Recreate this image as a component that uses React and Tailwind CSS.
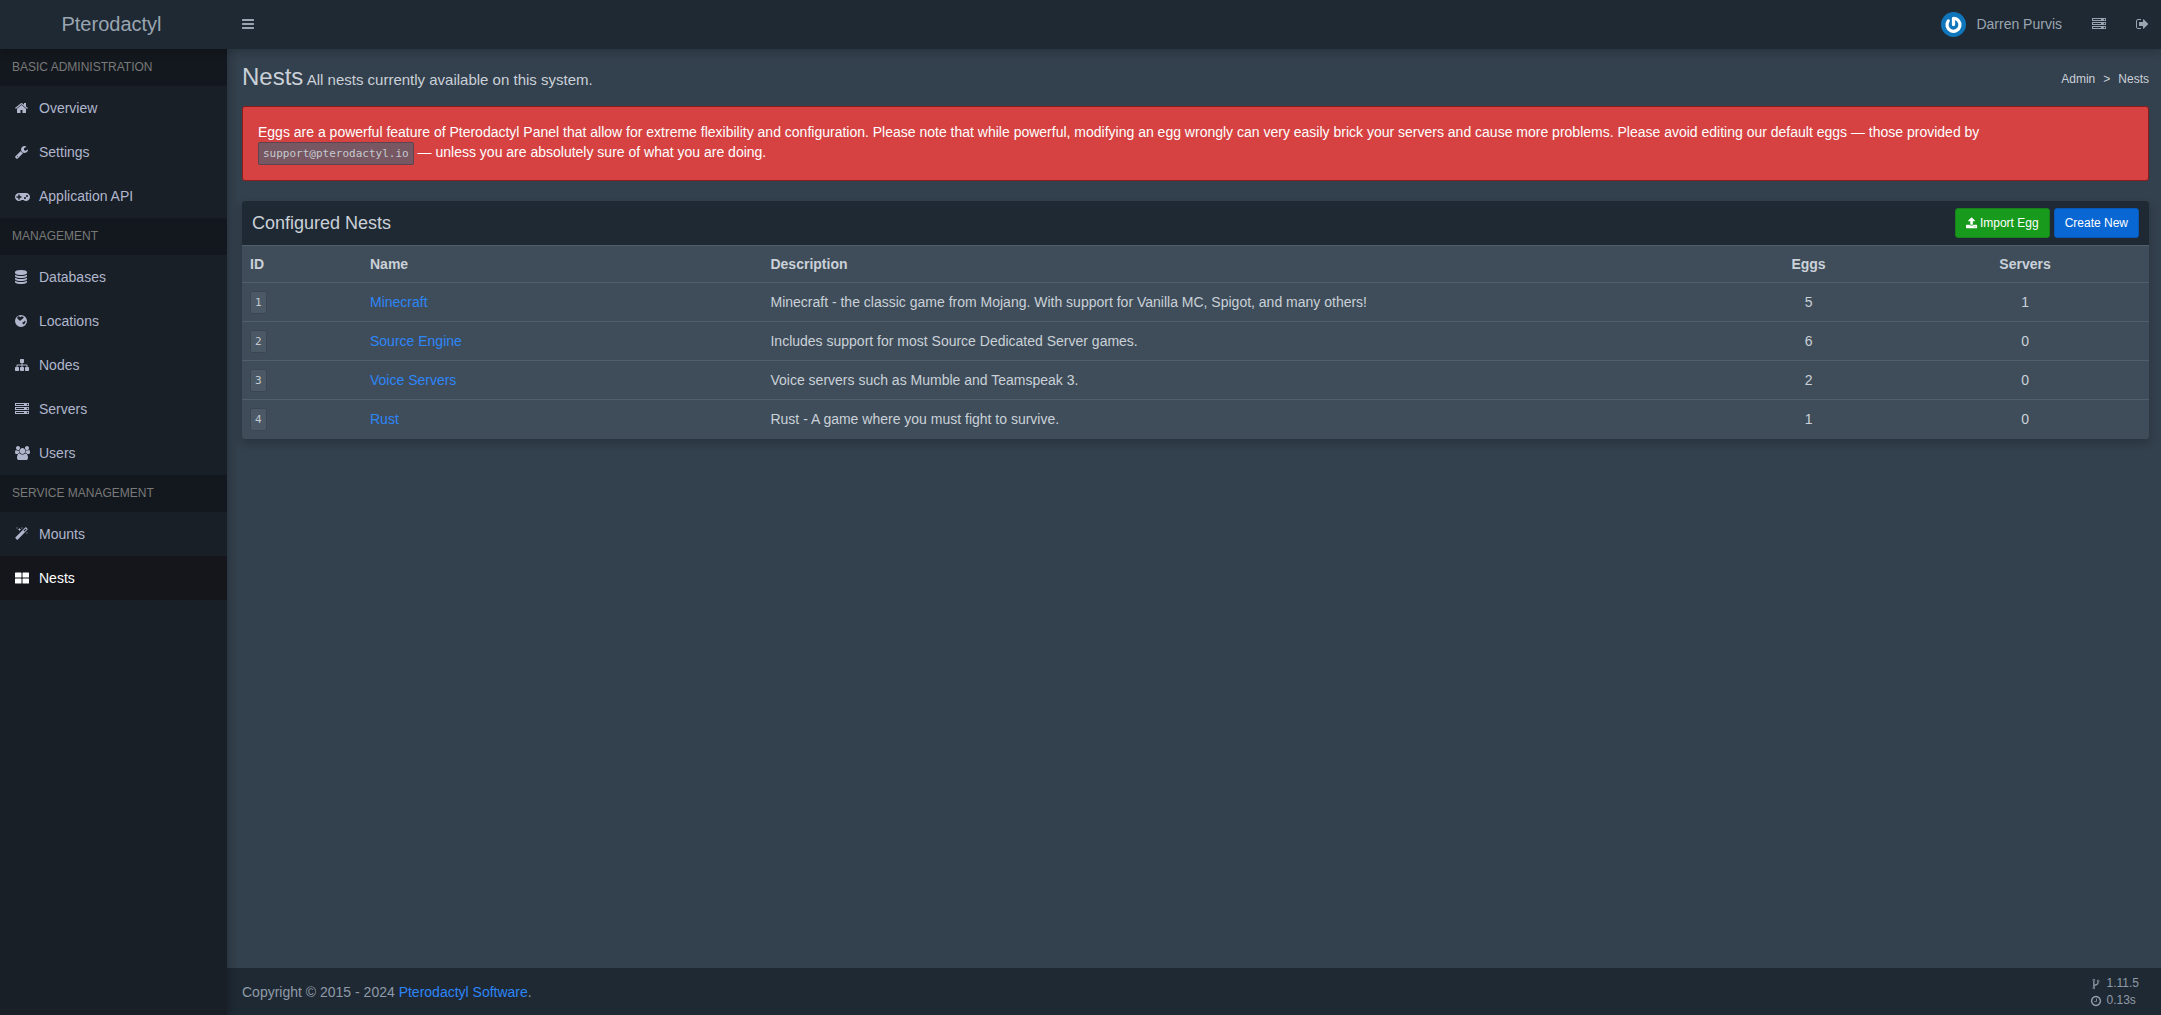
import React from 'react';

// path data on a 1792 unit grid, 128 units per pixel at 14px
const icons = {
  home: {
    box: '64 0 1664 1792',
    d: 'M1472 992v480q0 26-19 45t-45 19h-384v-384h-256v384h-384q-26 0-45-19t-19-45v-480q0-1 .5-3t.5-3l575-474 575 474q1 2 1 6zm223-69l-62 74q-8 9-21 11h-3q-13 0-21-7l-692-577-692 577q-12 8-24 7-13-2-21-11l-62-74q-8-10-7-23.5t11-21.5l719-599q32-26 76-26t76 26l244 204v-195q0-14 9-23t23-9h192q14 0 23 9t9 23v408l219 182q10 8 11 21.5t-7 23.5z',
  },
  wrench: {
    box: '64 0 1664 1792',
    d: 'M448 1472q0-26-19-45t-45-19-45 19-19 45 19 45 45 19 45-19 19-45zm644-420l-682 682q-37 37-90 37-52 0-91-37l-106-108q-38-36-38-90 0-53 38-91l681-681q39 98 114.5 173.5t173.5 114.5zm634-435q0 39-23 106-47 134-164.5 217.5t-258.5 83.5q-185 0-316.5-131.5t-131.5-316.5 131.5-316.5 316.5-131.5q58 0 121.5 16.5t107.5 46.5q16 11 16 28t-16 28l-293 169v224l193 107q5-3 79-48.5t135.5-81 70.5-35.5q15 0 23.5 10t8.5 25z',
  },
  gamepad: {
    box: '0 0 1920 1792',
    d: 'M832 1088v-128q0-14-9-23t-23-9h-192v-192q0-14-9-23t-23-9h-128q-14 0-23 9t-9 23v192h-192q-14 0-23 9t-9 23v128q0 14 9 23t23 9h192v192q0 14 9 23t23 9h128q14 0 23-9t9-23v-192h192q14 0 23-9t9-23zm576 64q0-53-37.5-90.5t-90.5-37.5-90.5 37.5-37.5 90.5 37.5 90.5 90.5 37.5 90.5-37.5 37.5-90.5zm256-256q0-53-37.5-90.5t-90.5-37.5-90.5 37.5-37.5 90.5 37.5 90.5 90.5 37.5 90.5-37.5 37.5-90.5zm256 128q0 212-150 362t-362 150q-192 0-338-128h-220q-146 128-338 128-212 0-362-150t-150-362 150-362 362-150h896q212 0 362 150t150 362z',
  },
  database: {
    box: '128 0 1536 1792',
    d: 'M896 768q237 0 443-43t325-127v170q0 69-103 128t-280 93.5-385 34.5-385-34.5-280-93.5-103-128v-170q119 84 325 127t443 43zm0 768q237 0 443-43t325-127v170q0 69-103 128t-280 93.5-385 34.5-385-34.5-280-93.5-103-128v-170q119 84 325 127t443 43zm0-384q237 0 443-43t325-127v170q0 69-103 128t-280 93.5-385 34.5-385-34.5-280-93.5-103-128v-170q119 84 325 127t443 43zm0-1152q208 0 385 34.5t280 93.5 103 128v128q0 69-103 128t-280 93.5-385 34.5-385-34.5-280-93.5-103-128v-128q0-69 103-128t280-93.5 385-34.5z',
  },
  globe: {
    box: '128 0 1536 1792',
    d: 'M896 128a768 768 0 1 0 0 1536a768 768 0 1 0 0-1536zM400 440L560 300L740 340L860 430L980 280L1180 340L1240 480L1080 640L900 760L780 900L640 760L460 620zM1060 1080L1280 1000L1400 820L1480 1000L1360 1260L1160 1340z',
  },
  sitemap: {
    box: '0 0 1792 1792',
    d: 'M1792 1248v320q0 40-28 68t-68 28h-320q-40 0-68-28t-28-68v-320q0-40 28-68t68-28h96v-192h-512v192h96q40 0 68 28t28 68v320q0 40-28 68t-68 28h-320q-40 0-68-28t-28-68v-320q0-40 28-68t68-28h96v-192h-512v192h96q40 0 68 28t28 68v320q0 40-28 68t-68 28h-320q-40 0-68-28t-28-68v-320q0-40 28-68t68-28h96v-192q0-52 38-90t90-38h512v-192h-96q-40 0-68-28t-28-68v-320q0-40 28-68t68-28h320q40 0 68 28t28 68v320q0 40-28 68t-68 28h-96v192h512q52 0 90 38t38 90v192h96q40 0 68 28t28 68z',
  },
  server: {
    box: '0 0 1792 1792',
    d: 'M128 1408h1024v-128h-1024v128zM128 896h1024v-128h-1024v128zM1696 1344q0-40-28-68t-68-28-68 28-28 68 28 68 68 28 68-28 28-68zM128 384h1024v-128h-1024v128zM1696 832q0-40-28-68t-68-28-68 28-28 68 28 68 68 28 68-28 28-68zM1696 320q0-40-28-68t-68-28-68 28-28 68 28 68 68 28 68-28 28-68zM1792 1152v384h-1792v-384h1792zM1792 640v384h-1792v-384h1792zM1792 128v384h-1792v-384h1792z',
  },
  users: {
    box: '0 0 1920 1792',
    d: 'M593 896q-162 5-265 128h-134q-82 0-138-40.5t-56-118.5q0-353 124-353 6 0 43.5 21t97.5 42.5 119 21.5q67 0 133-23-5 37-5 66 0 159 81 290zm1071 637q0 120-73 189.5t-194 69.5h-874q-121 0-194-69.5t-73-189.5q0-53 3.5-103.5t14-109 26.5-108.5 43-97.5 62-81 85.5-53.5 111.5-20q10 0 43 21.5t73 48 107 48 135 21.5 135-21.5 107-48 73-48 43-21.5q61 0 111.5 20t85.5 53.5 62 81 43 97.5 26.5 108.5 14 109 3.5 103.5zm-1024-1277q0 106-75 181t-181 75-181-75-75-181 75-181 181-75 181 75 75 181zm704 384q0 159-112.5 271.5t-271.5 112.5-271.5-112.5-112.5-271.5 112.5-271.5 271.5-112.5 271.5 112.5 112.5 271.5zm576 225q0 78-56 118.5t-138 40.5h-134q-103-123-265-128 81-131 81-290 0-29-5-66 66 23 133 23 59 0 119-21.5t97.5-42.5 43.5-21q124 0 124 353zm-128-609q0 106-75 181t-181 75-181-75-75-181 75-181 181-75 181 75 75 181z',
  },
  magic: {
    box: '64 0 1664 1792',
    d: 'M1254 581l293-293-107-107-293 293zm447-293q0 27-18 45l-1286 1286q-18 18-45 18t-45-18l-198-198q-18-18-18-45t18-45l1286-1286q18-18 45-18t45 18l198 198q18 18 18 45zm-1351-190l98 30-98 30-30 98-30-98-98-30 98-30 30-98zm350 162l196 60-196 60-60 196-60-196-196-60 196-60 60-196zm930 478l98 30-98 30-30 98-30-98-98-30 98-30 30-98zm-640-640l98 30-98 30-30 98-30-98-98-30 98-30 30-98z',
  },
  thLarge: {
    box: '0 0 1792 1792',
    d: 'M64 192h704q64 0 64 64v512q0 64-64 64h-704q-64 0-64-64v-512q0-64 64-64zM1024 192h704q64 0 64 64v512q0 64-64 64h-704q-64 0-64-64v-512q0-64 64-64zM64 960h704q64 0 64 64v512q0 64-64 64h-704q-64 0-64-64v-512q0-64 64-64zM1024 960h704q64 0 64 64v512q0 64-64 64h-704q-64 0-64-64v-512q0-64 64-64z',
  },
  bars: {
    box: '128 0 1536 1792',
    d: 'M1664 1344v128q0 26-19 45t-45 19h-1408q-26 0-45-19t-19-45v-128q0-26 19-45t45-19h1408q26 0 45 19t19 45zm0-512v128q0 26-19 45t-45 19h-1408q-26 0-45-19t-19-45v-128q0-26 19-45t45-19h1408q26 0 45 19t19 45zm0-512v128q0 26-19 45t-45 19h-1408q-26 0-45-19t-19-45v-128q0-26 19-45t45-19h1408q26 0 45 19t19 45z',
  },
  signOut: {
    box: '64 0 1664 1792',
    d: 'M704 1440q0 4 1 20t.5 26.5-3 23.5-10 19.5-20.5 6.5h-320q-119 0-203.5-84.5t-84.5-203.5v-704q0-119 84.5-203.5t203.5-84.5h320q13 0 22.5 9.5t9.5 22.5q0 4 1 20t.5 26.5-3 23.5-10 19.5-20.5 6.5h-320q-66 0-113 47t-47 113v704q0 66 47 113t113 47h312l11.5 1 11.5 3 8 5.5 7 9 2 13.5zm928-544q0 26-19 45l-544 544q-19 19-45 19t-45-19-19-45v-288h-448q-26 0-45-19t-19-45v-384q0-26 19-45t45-19h448v-288q0-26 19-45t45-19 45 19l544 544q19 19 19 45z',
  },
  upload: {
    box: '64 0 1664 1792',
    d: 'M1344 1472q0-26-19-45t-45-19-45 19-19 45 19 45 45 19 45-19 19-45zm256 0q0-26-19-45t-45-19-45 19-19 45 19 45 45 19 45-19 19-45zm128-224v320q0 40-28 68t-68 28h-1472q-40 0-68-28t-28-68v-320q0-40 28-68t68-28h427q21 56 70.5 92t110.5 36h256q61 0 110.5-36t70.5-92h427q40 0 68 28t28 68zm-325-648q-17 40-59 40h-256v448q0 26-19 45t-45 19h-256q-26 0-45-19t-19-45v-448h-256q-42 0-59-40-17-39 14-69l448-448q18-19 45-19t45 19l448 448q31 30 14 69z',
  },
  codeFork: {
    box: '0 0 1792 1792',
    d: 'M672 1472q0-40-28-68t-68-28-68 28-28 68 28 68 68 28 68-28 28-68zm0-1152q0-40-28-68t-68-28-68 28-28 68 28 68 68 28 68-28 28-68zm640 128q0-40-28-68t-68-28-68 28-28 68 28 68 68 28 68-28 28-68zm96 0q0 52-26 96.5t-70 69.5q-2 287-226 414-67 38-203 81-128 40-169.5 71t-41.5 100v26q44 25 70 69.5t26 96.5q0 80-56 136t-136 56-136-56-56-136q0-52 26-96.5t70-69.5v-820q-44-25-70-69.5t-26-96.5q0-80 56-136t136-56 136 56 56 136q0 52-26 96.5t-70 69.5v497q54-26 154-57 55-17 87.5-29.5t70.5-31 59-39.5 40.5-51 28-69.5 8.5-91.5q-44-25-70-69.5t-26-96.5q0-80 56-136t136-56 136 56 56 136z',
  },
  clock: {
    box: '0 0 1792 1792',
    d: 'M1024 544v448q0 14-9 23t-23 9h-320q-14 0-23-9t-9-23v-64q0-14 9-23t23-9h224v-352q0-14 9-23t23-9h64q14 0 23 9t9 23zm416 352q0-148-73-273t-198-198-273-73-273 73-198 198-73 273 73 273 198 198 273 73 273-73 198-198 73-273zm224 0q0 209-103 385.5t-279.5 279.5-385.5 103-385.5-103-279.5-279.5-103-385.5 103-385.5 279.5-279.5 385.5-103 385.5 103 279.5 279.5 103 385.5z',
  },
};

const menu = [
  {
    title: 'BASIC ADMINISTRATION',
    items: [
      { icon: 'home', label: 'Overview' },
      { icon: 'wrench', label: 'Settings' },
      { icon: 'gamepad', label: 'Application API' },
    ],
  },
  {
    title: 'MANAGEMENT',
    items: [
      { icon: 'database', label: 'Databases' },
      { icon: 'globe', label: 'Locations' },
      { icon: 'sitemap', label: 'Nodes' },
      { icon: 'server', label: 'Servers' },
      { icon: 'users', label: 'Users' },
    ],
  },
  {
    title: 'SERVICE MANAGEMENT',
    items: [
      { icon: 'magic', label: 'Mounts' },
      { icon: 'thLarge', label: 'Nests', active: true },
    ],
  },
];

const nests = [
  {
    id: 1,
    name: 'Minecraft',
    description:
      'Minecraft - the classic game from Mojang. With support for Vanilla MC, Spigot, and many others!',
    eggs: 5,
    servers: 1,
  },
  {
    id: 2,
    name: 'Source Engine',
    description: 'Includes support for most Source Dedicated Server games.',
    eggs: 6,
    servers: 0,
  },
  {
    id: 3,
    name: 'Voice Servers',
    description: 'Voice servers such as Mumble and Teamspeak 3.',
    eggs: 2,
    servers: 0,
  },
  {
    id: 4,
    name: 'Rust',
    description: 'Rust - A game where you must fight to survive.',
    eggs: 1,
    servers: 0,
  },
];

function Icon({ name, className = 'h-3.5' }) {
  const icon = icons[name];
  return (
    <svg
      viewBox={icon.box}
      className={`${className} w-auto shrink-0 fill-current overflow-visible`}
      fillRule="evenodd"
      aria-hidden="true"
    >
      <path d={icon.d} />
    </svg>
  );
}

function Avatar() {
  return (
    <svg viewBox="0 0 50 50" className="w-[25px] h-[25px] shrink-0" aria-hidden="true">
      <circle cx="25" cy="25" r="25" fill="#0f76bb" />
      <path
        d="M25 25V12.5a13 13 0 1 1-10.5 5.3"
        fill="none"
        stroke="#fff"
        strokeWidth="6.5"
        strokeLinecap="round"
        strokeLinejoin="round"
      />
    </svg>
  );
}

function Header() {
  return (
    <header className="relative z-20 flex h-[49px] bg-[#1f2933] pb-px text-[#9aa5b1] shadow-[0_3px_8px_rgba(0,0,0,0.2)]">
      <a href="#" className="flex w-[227px] items-center justify-center pr-1 text-xl">
        Pterodactyl
      </a>
      <nav className="flex flex-1 items-center justify-between">
        <button type="button" aria-label="Toggle navigation" className="px-[15px] py-4">
          <Icon name="bars" />
        </button>
        <div className="flex h-full items-center">
          <a href="#" className="flex items-center gap-2.5 px-[15px]">
            <Avatar />
            <span>Darren Purvis</span>
          </a>
          <a href="#" aria-label="Exit admin control" className="px-[15px]">
            <Icon name="server" />
          </a>
          <a href="#" aria-label="Logout" className="pr-3 pl-[15px]">
            <Icon name="signOut" />
          </a>
        </div>
      </nav>
    </header>
  );
}

function Sidebar() {
  return (
    <aside className="relative z-10 w-[227px] shrink-0 bg-[#181f27] shadow-[3px_0_8px_rgba(0,0,0,0.2)]">
      {menu.map((section) => (
        <div key={section.title}>
          <h4 className="bg-[#13181e] px-3 py-2.5 text-xs leading-[17px] text-[#797979]">
            {section.title}
          </h4>
          <ul>
            {section.items.map((item) => (
              <li key={item.label}>
                <a
                  href="#"
                  className={`flex items-center py-3 pr-1 pl-[15px] ${
                    item.active ? 'bg-[#15161c] text-white' : 'text-[#b0b6cc]'
                  }`}
                >
                  <span className="flex w-6 items-center">
                    <Icon name={item.icon} />
                  </span>
                  {item.label}
                </a>
              </li>
            ))}
          </ul>
        </div>
      ))}
    </aside>
  );
}

function Code({ children, className }) {
  return (
    <code
      className={`rounded-xs border px-1 py-1 font-['DejaVu_Sans_Mono',monospace] text-[11px] leading-4 ${className}`}
    >
      {children}
    </code>
  );
}

function NestsTable() {
  return (
    <section className="mt-5 overflow-hidden rounded-[3px] bg-[#3f4d5a] shadow-[0_4px_8px_rgba(0,0,0,0.2)]">
      {/* BOX HEADER */}
      <div className="flex items-center justify-between bg-[#1f2933] px-2.5">
        <h3 className="text-lg leading-[44px]">Configured Nests</h3>
        <div className="flex gap-1">
          <button
            type="button"
            className="flex h-[30px] items-center gap-[3px] rounded-[3px] border border-[#1c7f1f] bg-[#189a1c] px-2.5 text-xs text-white"
          >
            <Icon name="upload" className="h-3" />
            Import Egg
          </button>
          <button
            type="button"
            className="h-[30px] rounded-[3px] border border-[#0b57b5] bg-[#0967d3] px-2.5 text-xs text-white"
          >
            Create New
          </button>
        </div>
      </div>

      {/* BOX BODY */}
      <table className="w-full table-fixed border-collapse">
        <thead>
          <tr className="border-t border-[#515f6c] text-left">
            <th className="w-[120px] px-2 py-2">ID</th>
            <th className="w-[21%] px-2 py-2">Name</th>
            <th className="w-[50%] px-2 py-2">Description</th>
            <th className="px-2 py-2 text-center">Eggs</th>
            <th className="w-[13%] px-2 py-2 text-center">Servers</th>
          </tr>
        </thead>
        <tbody>
          {nests.map((nest) => (
            <tr key={nest.id} className="h-[39px] border-t border-[#515f6c]">
              <td className="px-2 pb-0.5">
                <Code className="border-[#3b4650] bg-[#4b5865] text-[#c3cad1]">{nest.id}</Code>
              </td>
              <td className="px-2">
                <a href="#" className="text-[#2d86f8]">
                  {nest.name}
                </a>
              </td>
              <td className="px-2">{nest.description}</td>
              <td className="px-2 text-center">{nest.eggs}</td>
              <td className="px-2 text-center">{nest.servers}</td>
            </tr>
          ))}
        </tbody>
      </table>
    </section>
  );
}

function Footer() {
  return (
    <footer className="flex items-center justify-between bg-[#1f2933] pt-[7px] pr-[22px] pb-1.5 pl-[15px] text-[#8f9ba8]">
      <p>
        Copyright © 2015 - 2024{' '}
        <a href="#" className="text-[#2d86f8]">
          Pterodactyl Software
        </a>
        .
      </p>
      <div className="text-xs leading-[17px]">
        <p className="flex items-center gap-[5px]">
          <Icon name="codeFork" className="h-3" />
          1.11.5
        </p>
        <p className="flex items-center gap-[5px]">
          <Icon name="clock" className="h-3" />
          0.13s
        </p>
      </div>
    </footer>
  );
}

function App() {
  return (
    <div className="flex min-h-screen flex-col bg-[#33404d] font-['Liberation_Sans',Arial,sans-serif] text-sm text-[#cad1d8]">
      <Header />
      <div className="flex flex-1">
        <Sidebar />
        <div className="flex min-w-0 flex-1 flex-col">
          <main className="flex-1 pr-3 pl-[15px]">
            {/* PAGE TITLE */}
            <div className="flex items-end justify-between pt-[13px]">
              <h1 className="text-2xl leading-[30px]">
                Nests
                <small className="text-[15px] leading-none"> All nests currently available on this system.</small>
              </h1>
              <ol className="flex gap-2 text-xs leading-[26px]">
                <li>
                  <a href="#">Admin</a>
                </li>
                <li>&gt;</li>
                <li>Nests</li>
              </ol>
            </div>

            {/* WARNING */}
            <div className="mt-3.5 rounded-[3px] border border-[#8b1c1c] bg-[#d64242] px-[15px] pt-[15px] pb-[18px] text-white">
              Eggs are a powerful feature of Pterodactyl Panel that allow for extreme flexibility and
              configuration. Please note that while powerful, modifying an egg wrongly can very easily
              brick your servers and cause more problems. Please avoid editing our default eggs — those
              provided by <Code className="border-[#5c4550] bg-[#775761] text-[#c3cad1]">support@pterodactyl.io</Code> — unless
              you are absolutely sure of what you are doing.
            </div>

            <NestsTable />
          </main>
          <Footer />
        </div>
      </div>
    </div>
  );
}

export default App;
